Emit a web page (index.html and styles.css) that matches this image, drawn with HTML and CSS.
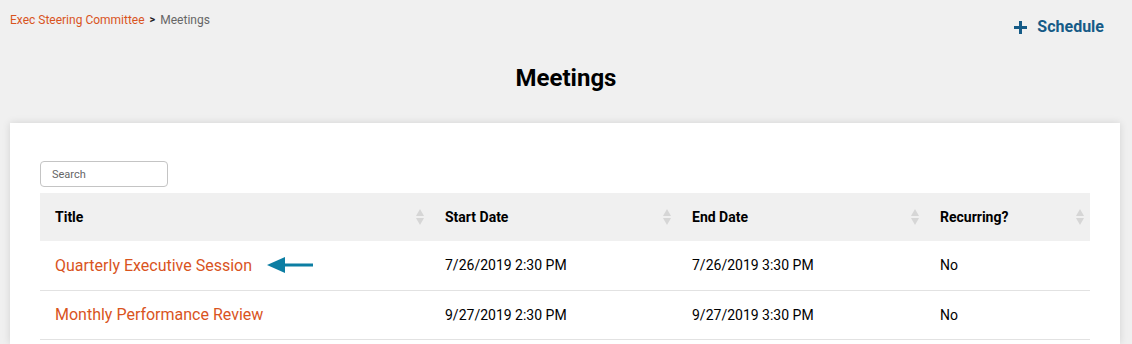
FILE: index.html
```html
<!DOCTYPE html>
<html>
<head>
<meta charset="utf-8">
<link rel="stylesheet" href="styles.css">
</head>
<body>
<div class="topbar">
  <div class="crumbs"><a class="crumb-link">Exec Steering Committee</a><span class="sep">&gt;</span><span class="crumb-cur">Meetings</span></div>
  <a class="schedule"><svg class="plus" width="13" height="13" viewBox="0 0 13 13"><rect x="5" y="0" width="3" height="13" fill="currentColor"/><rect x="0" y="5" width="13" height="3" fill="currentColor"/></svg>Schedule</a>
</div>
<h1 class="page-title">Meetings</h1>
<div class="card">
  <div class="search-box">Search</div>
  <table class="grid">
    <thead>
      <tr>
        <th class="c1"><div class="th-in"><span>Title</span><i class="sort"></i></div></th>
        <th class="c2"><div class="th-in"><span>Start Date</span><i class="sort"></i></div></th>
        <th class="c3"><div class="th-in"><span>End Date</span><i class="sort"></i></div></th>
        <th class="c4"><div class="th-in"><span>Recurring?</span><i class="sort"></i></div></th>
      </tr>
    </thead>
    <tbody>
      <tr>
        <td><span class="link-cell"><a class="mlink">Quarterly Executive Session</a><svg class="arrow" width="46" height="16" viewBox="0 0 46 16"><polygon points="0,8 18,0 18,16" fill="#0c7ea3"/><rect x="16" y="6.5" width="30" height="3" fill="#0c7ea3"/></svg></span></td>
        <td>7/26/2019 2:30 PM</td>
        <td>7/26/2019 3:30 PM</td>
        <td>No</td>
      </tr>
      <tr>
        <td><a class="mlink">Monthly Performance Review</a></td>
        <td>9/27/2019 2:30 PM</td>
        <td>9/27/2019 3:30 PM</td>
        <td>No</td>
      </tr>
    </tbody>
  </table>
</div>
</body>
</html>
```
FILE: styles.css
```css
html, body {
  margin: 0;
  padding: 0;
  background: #f0f0f0;
  font-family: Roboto, "Liberation Sans", Arial, sans-serif;
  color: #000;
  height: 344px;
  overflow: hidden;
}
.topbar {
  display: flex;
  justify-content: space-between;
  align-items: flex-start;
  padding: 12px 28px 0 10px;
  height: 34px;
}
.crumbs {
  font-size: 12px;
  line-height: 16px;
  display: flex;
  align-items: center;
}
.crumb-link { color: #d9541e; }
.sep { margin: 0 5px; color: #222; font-weight: bold; font-size: 11px; }
.crumb-cur { color: #666; }
.schedule {
  display: flex;
  align-items: center;
  color: #155b87;
  font-weight: bold;
  font-size: 16px;
  line-height: 20px;
  margin-top: 5px;
}
.plus { margin-right: 10px; }
.page-title {
  margin: 18px 0 0 0;
  text-align: center;
  font-size: 24px;
  line-height: 28px;
  font-weight: bold;
  height: 59px;
}
.card {
  margin: 0 12px 0 10px;
  background: #fff;
  box-shadow: 0 0 8px rgba(0,0,0,0.12);
  padding: 38px 30px 0 30px;
  height: 183px;
}
.search-box {
  width: 115px;
  height: 24px;
  border: 1px solid #c4c4c4;
  border-radius: 4px;
  font-size: 11px;
  line-height: 25px;
  padding-left: 11px;
  color: #666;
  margin-bottom: 6px;
}
.grid {
  width: 100%;
  border-collapse: collapse;
  table-layout: fixed;
}
.grid th, .grid td {
  box-sizing: border-box;
}
.grid th {
  background: #f0f0f0;
  height: 48px;
  padding: 0 6px 0 15px;
  text-align: left;
  font-size: 14px;
  font-weight: bold;
}
.c1 { width: 390px; }
.c2 { width: 247px; }
.c3 { width: 248px; }
.th-in {
  display: flex;
  justify-content: space-between;
  align-items: center;
}
.sort {
  display: inline-block;
  width: 8px;
  height: 16px;
  position: relative;
}
.sort::before, .sort::after {
  content: "";
  position: absolute;
  left: 0;
  border-left: 4px solid transparent;
  border-right: 4px solid transparent;
}
.sort::before { top: 0; border-bottom: 7px solid #d6d6d6; }
.sort::after { bottom: 0; border-top: 7px solid #d6d6d6; }
.grid td {
  height: 49px;
  padding: 0 10px 0 15px;
  border-bottom: 1px solid #e2e2e2;
  font-size: 14px;
}
.mlink {
  color: #d9541e;
  font-size: 16px;
}
.link-cell {
  display: flex;
  align-items: center;
}
.arrow { margin-left: 15px; }
```
